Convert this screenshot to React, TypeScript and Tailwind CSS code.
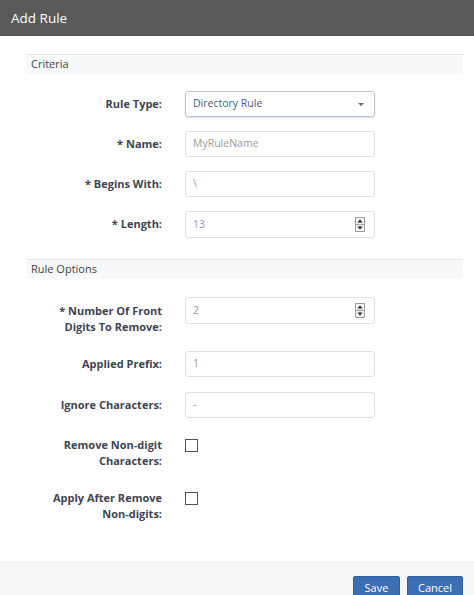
import React from "react";

const font = { fontFamily: '"Open Sans", "Liberation Sans", sans-serif' };

function Spinner() {
  return (
    <svg width="10" height="15" viewBox="0 0 10 15" className="shrink-0">
      <rect x="0.5" y="0.5" width="9" height="14" fill="#eeeeee" stroke="#a0a0a0" />
      <line x1="0.5" y1="7.5" x2="9.5" y2="7.5" stroke="#a0a0a0" />
      <path d="M2.5 5.5 L5 2.5 L7.5 5.5 Z" fill="#222" />
      <path d="M2.5 9.5 L5 12.5 L7.5 9.5 Z" fill="#222" />
    </svg>
  );
}

function Label({ children, pt = "pt-[5px]" }: { children: React.ReactNode; pt?: string }) {
  return (
    <div className={`w-[135px] shrink-0 text-right text-[11px] leading-[16px] font-bold text-[#3e4452] ${pt}`}>
      {children}
    </div>
  );
}

function TextInput({ value, spinner }: { value: string; spinner?: boolean }) {
  return (
    <div className="ml-[23px] flex h-[26px] w-[190px] items-center justify-between rounded-[3px] border border-[#dde1e6] bg-white pl-[7px] pr-[9px] text-[10.5px] text-[#9a9a9a]">
      <span>{value}</span>
      {spinner && <Spinner />}
    </div>
  );
}

function Section({ title }: { title: string }) {
  return (
    <div className="flex h-[20px] items-center border-t border-[#e2e5ea] bg-[#f7f8f9] pl-[4px] text-[11px] text-[#444]">
      {title}
    </div>
  );
}

function Checkbox() {
  return <div className="ml-[23px] mt-[6px] h-[13px] w-[13px] border border-[#555] bg-white" />;
}

export default function App() {
  return (
    <div style={font} className="relative h-[595px] w-[474px] overflow-hidden bg-white">
      <div className="flex h-[36px] items-center bg-[#595959] pl-[11px] text-[13.5px] text-white">Add Rule</div>

      <div className="pl-[27px] pr-[11px]">
        <div className="mt-[18px]">
          <Section title="Criteria" />
        </div>

        <div className="mt-[17px] flex items-start">
          <Label>Rule Type:</Label>
          <div className="ml-[23px] flex h-[26px] w-[190px] items-center justify-between rounded-[3px] border border-[#b9c5d8] bg-white pl-[7px] pr-[10px] text-[10.5px] text-[#4a5a82] shadow-[0_1px_2px_rgba(120,140,170,0.25)]">
            <span>Directory Rule</span>
            <svg width="6" height="3" viewBox="0 0 6 3">
              <path d="M0 0 L6 0 L3 3 Z" fill="#666" />
            </svg>
          </div>
        </div>

        <div className="mt-[14px] flex items-start">
          <Label>* Name:</Label>
          <TextInput value="MyRuleName" />
        </div>

        <div className="mt-[14px] flex items-start">
          <Label>* Begins With:</Label>
          <TextInput value="\" />
        </div>

        <div className="mt-[14px] flex items-start">
          <Label>* Length:</Label>
          <div className="ml-[23px] flex h-[27px] w-[190px] items-center justify-between rounded-[3px] border border-[#dde1e6] bg-white pl-[7px] pr-[9px] text-[10.5px] text-[#9a9a9a]">
            <span>13</span>
            <Spinner />
          </div>
        </div>

        <div className="mt-[21px]">
          <Section title="Rule Options" />
        </div>

        <div className="mt-[18px] flex items-start">
          <Label pt="pt-[6px]">
            * Number Of Front
            <br />
            Digits To Remove:
          </Label>
          <div className="ml-[23px] flex h-[27px] w-[190px] items-center justify-between rounded-[3px] border border-[#dde1e6] bg-white pl-[7px] pr-[9px] text-[10.5px] text-[#9a9a9a]">
            <span>2</span>
            <Spinner />
          </div>
        </div>

        <div className="mt-[16px] flex items-start">
          <Label>Applied Prefix:</Label>
          <TextInput value="1" />
        </div>

        <div className="mt-[15px] flex items-start">
          <Label>Ignore Characters:</Label>
          <TextInput value="-" />
        </div>

        <div className="mt-[15px] flex items-start">
          <Label pt="pt-[4px]">
            Remove Non-digit
            <br />
            Characters:
          </Label>
          <Checkbox />
        </div>

        <div className="mt-[17px] flex items-start">
          <Label pt="pt-[4px]">
            Apply After Remove
            <br />
            Non-digits:
          </Label>
          <Checkbox />
        </div>
      </div>

      <div className="absolute left-0 right-0 top-[562px] h-[40px] border-t border-[#ececec] bg-[#f6f6f6]">
        <div className="flex justify-end gap-[7px] pr-[11px] pt-[13px]">
          <button className="h-[24px] w-[47px] rounded-[2px] border border-[#2f5f9e] bg-[#3c6eb4] text-[11px] text-white">
            Save
          </button>
          <button className="h-[24px] w-[56px] rounded-[2px] border border-[#2f5f9e] bg-[#3c6eb4] text-[11px] text-white">
            Cancel
          </button>
        </div>
      </div>
    </div>
  );
}
